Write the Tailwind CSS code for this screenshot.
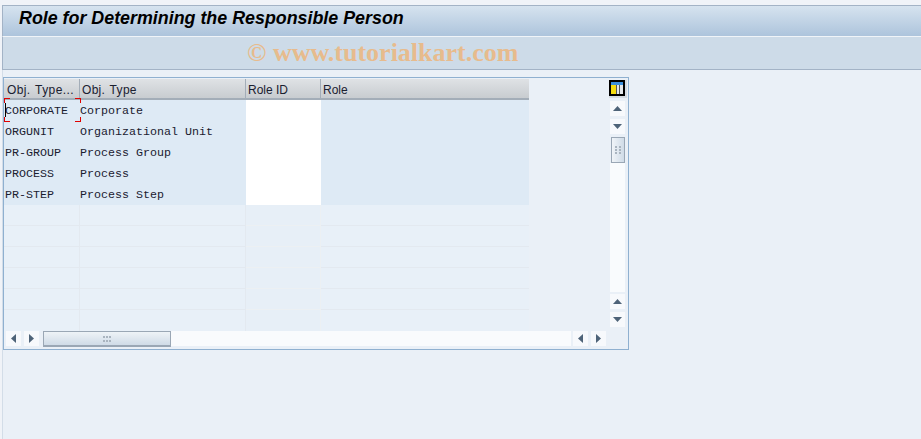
<!DOCTYPE html>
<html lang="en">
<head>
    <meta charset="UTF-8">
    <title>Role for Determining the Responsible Person</title>
    <script src="https://cdn.jsdelivr.net/npm/@tailwindcss/browser@4"></script>
</head>
<body class="bg-[#f0f3f8] h-[439px] w-[921px] overflow-hidden flex flex-col font-['Liberation_Sans',sans-serif]">
    <div class="h-[5px] shrink-0"></div>

    <div class="ml-[2px] flex-1 flex flex-col bg-[#eaf0f7] border-l border-[#d3dde8]">
        <!-- Title bar -->
        <div class="-ml-px h-[32px] shrink-0 flex items-center pl-[16px] pb-[4px] border-l border-t border-[#a3b3c6] bg-gradient-to-b from-[#d6e3ef] to-[#adc4dc] border-b border-b-[#f0f4f8]">
            <h1 class="text-[17.85px] leading-none font-bold italic text-black">Role for Determining the Responsible Person</h1>
        </div>

        <!-- Toolbar -->
        <div class="-ml-px h-[33px] shrink-0 flex items-center pl-[244px] pb-[1px] border-l border-b border-[#a3b3c6] bg-[#cddbe8]">
            <span class="font-['Liberation_Serif',serif] text-[26px] leading-none font-bold text-[#e7bb8d]">© www.tutorialkart.com</span>
        </div>

        <!-- Table panel -->
        <div class="mt-[7px] w-[626px] h-[273px] border border-[#8fb0d0] flex flex-col">
            <div class="flex h-[253px] shrink-0">
                <div class="w-[525px] pt-[1px] font-['Liberation_Mono',monospace] text-[11.67px] text-[#1a2030]">
                    <!-- Header -->
                    <div class="grid grid-cols-[76px_166px_75px_208px] h-[21px] bg-gradient-to-b from-[#dfe2e5] to-[#c8ccd0] border-b-2 border-[#a3adb8] font-['Liberation_Sans',sans-serif] text-[12px] leading-[22px]">
                        <div class="pl-[3px] border-r border-[#a3adb8] tracking-[0.4px] [word-spacing:1px]">Obj. Type...</div>
                        <div class="pl-[3px] -ml-px border-r border-[#a3adb8] tracking-[0.3px] [word-spacing:1px]">Obj. Type</div>
                        <div class="pl-[2px] border-r border-[#a3adb8]">Role ID</div>
                        <div class="pl-[2px]">Role</div>
                    </div>

                    <!-- Filled rows -->
                    <div class="grid grid-cols-[76px_166px_75px_208px] auto-rows-[21px] leading-[23px]">
                        <div class="relative pl-[1px] bg-[#deeaf5]">CORPORATE
                            <span class="absolute left-0 top-[-2px] w-[6px] h-[5px] border-l border-t border-[#e00000]"></span>
                            <span class="absolute right-[-1px] top-[-2px] w-[6px] h-[5px] border-r border-t border-[#e00000]"></span>
                            <span class="absolute left-0 bottom-[-1px] w-[6px] h-[5px] border-l border-b border-[#e00000]"></span>
                            <span class="absolute right-[-1px] bottom-[-1px] w-[6px] h-[5px] border-r border-b border-[#e00000]"></span>
                            <span class="absolute left-[1px] top-[3px] w-px h-[14px] bg-black"></span>
                        </div>
                        <div class="bg-[#deeaf5]">Corporate</div>
                        <div class="bg-white"></div>
                        <div class="bg-[#deeaf5]"></div>

                        <div class="pl-[1px] bg-[#deeaf5]">ORGUNIT</div>
                        <div class="bg-[#deeaf5]">Organizational Unit</div>
                        <div class="bg-white"></div>
                        <div class="bg-[#deeaf5]"></div>

                        <div class="pl-[1px] bg-[#deeaf5]">PR-GROUP</div>
                        <div class="bg-[#deeaf5]">Process Group</div>
                        <div class="bg-white"></div>
                        <div class="bg-[#deeaf5]"></div>

                        <div class="pl-[1px] bg-[#deeaf5]">PROCESS</div>
                        <div class="bg-[#deeaf5]">Process</div>
                        <div class="bg-white"></div>
                        <div class="bg-[#deeaf5]"></div>

                        <div class="pl-[1px] bg-[#deeaf5]">PR-STEP</div>
                        <div class="bg-[#deeaf5]">Process Step</div>
                        <div class="bg-white"></div>
                        <div class="bg-[#deeaf5]"></div>
                    </div>

                    <!-- Empty rows -->
                    <div class="grid grid-cols-[76px_166px_75px_208px] auto-rows-[21px]">
                        <div class="bg-[#e8f0f8] border-r border-b border-[#e3e9f0]"></div><div class="bg-[#e8f0f8] border-r border-b border-[#e3e9f0]"></div><div class="bg-[#e7eff7] border-r border-b border-[#ecf0f3]"></div><div class="bg-[#e8f0f8] border-b border-[#e3e9f0]"></div>
                        <div class="bg-[#e8f0f8] border-r border-b border-[#e3e9f0]"></div><div class="bg-[#e8f0f8] border-r border-b border-[#e3e9f0]"></div><div class="bg-[#e7eff7] border-r border-b border-[#ecf0f3]"></div><div class="bg-[#e8f0f8] border-b border-[#e3e9f0]"></div>
                        <div class="bg-[#e8f0f8] border-r border-b border-[#e3e9f0]"></div><div class="bg-[#e8f0f8] border-r border-b border-[#e3e9f0]"></div><div class="bg-[#e7eff7] border-r border-b border-[#ecf0f3]"></div><div class="bg-[#e8f0f8] border-b border-[#e3e9f0]"></div>
                        <div class="bg-[#e8f0f8] border-r border-b border-[#e3e9f0]"></div><div class="bg-[#e8f0f8] border-r border-b border-[#e3e9f0]"></div><div class="bg-[#e7eff7] border-r border-b border-[#ecf0f3]"></div><div class="bg-[#e8f0f8] border-b border-[#e3e9f0]"></div>
                        <div class="bg-[#e8f0f8] border-r border-b border-[#e3e9f0]"></div><div class="bg-[#e8f0f8] border-r border-b border-[#e3e9f0]"></div><div class="bg-[#e7eff7] border-r border-b border-[#ecf0f3]"></div><div class="bg-[#e8f0f8] border-b border-[#e3e9f0]"></div>
                        <div class="bg-[#e8f0f8] border-r border-[#e3e9f0]"></div><div class="bg-[#e8f0f8] border-r border-[#e3e9f0]"></div><div class="bg-[#e7eff7] border-r border-[#ecf0f3]"></div><div class="bg-[#e8f0f8]"></div>
                    </div>
                </div>

                <!-- Vertical scrollbar -->
                <div class="ml-[80px] w-[17px] flex flex-col items-center pt-[2px]">
                    <div class="w-[18px] h-[18px] bg-[#d5dbe2] shrink-0">
                        <svg width="16" height="16" viewBox="0 0 16 16" class="block">
                            <rect x="1" y="1" width="14" height="14" fill="#fff" stroke="#000" stroke-width="2"/>
                            <rect x="2" y="5" width="5" height="9" fill="#f5dc10"/>
                            <rect x="7" y="5" width="1" height="9" fill="#555"/>
                            <rect x="8" y="5" width="2" height="9" fill="#e4e7ea"/>
                            <rect x="10" y="5" width="1" height="9" fill="#555"/>
                            <rect x="11" y="5" width="3" height="9" fill="#e4e7ea"/>
                            <rect x="2" y="2" width="12" height="3" fill="#3b8fdc"/>
                        </svg>
                    </div>
                    <div class="mt-[3px] w-[15px] h-[15px] bg-[#f7f9fc] flex items-center justify-center shrink-0">
                        <svg width="9" height="5" viewBox="0 0 9 5"><path d="M4.5 0 L9 5 L0 5 Z" fill="#4e6378"/></svg>
                    </div>
                    <div class="mt-[3px] w-[15px] h-[15px] bg-[#f7f9fc] flex items-center justify-center shrink-0">
                        <svg width="9" height="5" viewBox="0 0 9 5"><path d="M0 0 L9 0 L4.5 5 Z" fill="#4e6378"/></svg>
                    </div>
                    <div class="mt-[3px] w-[14px] h-[26px] border border-[#9aa7b5] bg-gradient-to-r from-[#f0f4f8] to-[#cfdbe7] flex items-center justify-center shrink-0">
                        <svg width="6" height="8" viewBox="0 0 6 8" fill="#a9b4bf"><rect x="0" y="0" width="2" height="2"/><rect x="4" y="0" width="2" height="2"/><rect x="0" y="3" width="2" height="2"/><rect x="4" y="3" width="2" height="2"/><rect x="0" y="6" width="2" height="2"/><rect x="4" y="6" width="2" height="2"/></svg>
                    </div>
                    <div class="w-[15px] h-[129px] bg-[#f9fbfd] shrink-0"></div>
                    <div class="mt-[2px] w-[15px] h-[15px] bg-[#f7f9fc] flex items-center justify-center shrink-0">
                        <svg width="9" height="5" viewBox="0 0 9 5"><path d="M4.5 0 L9 5 L0 5 Z" fill="#4e6378"/></svg>
                    </div>
                    <div class="mt-[3px] w-[15px] h-[15px] bg-[#f7f9fc] flex items-center justify-center shrink-0">
                        <svg width="9" height="5" viewBox="0 0 9 5"><path d="M0 0 L9 0 L4.5 5 Z" fill="#4e6378"/></svg>
                    </div>
                </div>
            </div>

            <!-- Horizontal scrollbar -->
            <div class="flex items-start h-[16px] pl-[2px]">
                <div class="w-[15px] h-[15px] bg-[#f7f9fc] flex items-center justify-center">
                    <svg width="5" height="9" viewBox="0 0 5 9"><path d="M5 0 L5 9 L0 4.5 Z" fill="#4e6378"/></svg>
                </div>
                <div class="ml-[3px] w-[15px] h-[15px] bg-[#f7f9fc] flex items-center justify-center">
                    <svg width="5" height="9" viewBox="0 0 5 9"><path d="M0 0 L5 4.5 L0 9 Z" fill="#4e6378"/></svg>
                </div>
                <div class="ml-[4px] w-[128px] h-[16px] border border-[#9aa7b5] border-b-2 bg-gradient-to-b from-[#eef3f7] to-[#cfdbe7] flex items-center justify-center">
                    <svg width="8" height="6" viewBox="0 0 8 6" fill="#a9b4bf"><rect x="0" y="0" width="2" height="2"/><rect x="3" y="0" width="2" height="2"/><rect x="6" y="0" width="2" height="2"/><rect x="0" y="4" width="2" height="2"/><rect x="3" y="4" width="2" height="2"/><rect x="6" y="4" width="2" height="2"/></svg>
                </div>
                <div class="w-[400px] h-[15px] bg-[#f9fbfd]"></div>
                <div class="ml-[2px] w-[15px] h-[15px] bg-[#f7f9fc] flex items-center justify-center">
                    <svg width="5" height="9" viewBox="0 0 5 9"><path d="M5 0 L5 9 L0 4.5 Z" fill="#4e6378"/></svg>
                </div>
                <div class="ml-[3px] w-[15px] h-[15px] bg-[#f7f9fc] flex items-center justify-center">
                    <svg width="5" height="9" viewBox="0 0 5 9"><path d="M0 0 L5 4.5 L0 9 Z" fill="#4e6378"/></svg>
                </div>
            </div>
        </div>
    </div>
</body>
</html>
